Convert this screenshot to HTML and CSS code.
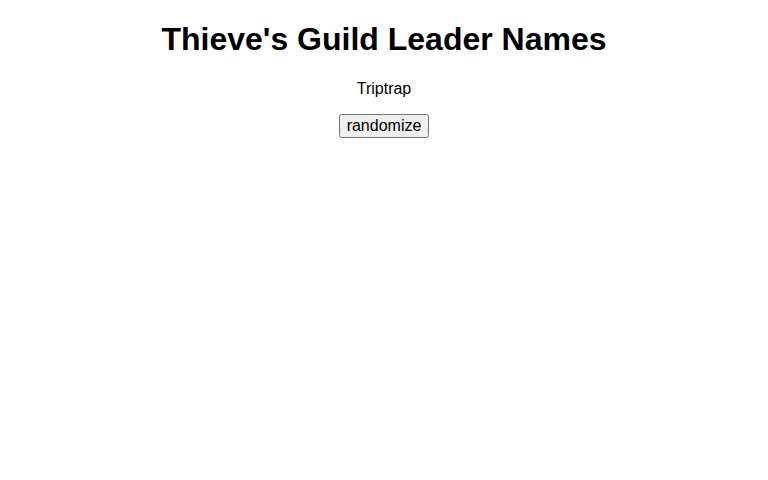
FILE: index.html
```html
<!DOCTYPE html>
<html lang="en">
<head>
<meta charset="utf-8">
<title>Thieve's Guild Leader Names</title>
<link rel="stylesheet" href="styles.css">
</head>
<body>
<main class="generator">
  <h1 class="generator-title">Thieve's Guild Leader Names</h1>
  <p class="generator-result">Triptrap</p>
  <button class="generator-button" type="button">randomize</button>
</main>
</body>
</html>
```

FILE: styles.css
```css
body {
  margin: 0;
  font-family: "Liberation Sans", Arial, sans-serif;
  background: #fff;
  color: #000;
}

.generator {
  text-align: center;
}

.generator-title {
  margin: 21.44px 0;
  font-size: 32px;
  font-weight: bold;
}

.generator-result {
  font-size: 16px;
}

.generator-button {
  font-family: inherit;
  font-size: 16px;
}
```
